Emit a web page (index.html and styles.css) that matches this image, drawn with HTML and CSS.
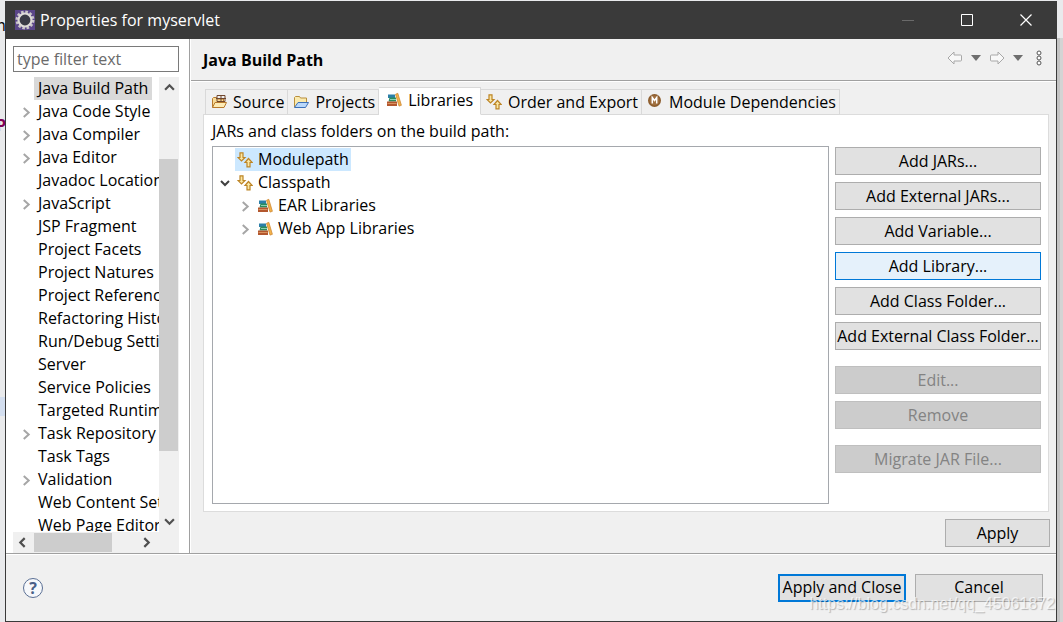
FILE: index.html
```
<!DOCTYPE html>
<html lang="en">
<head>
  <meta charset="UTF-8">
  <meta name="viewport" content="width=device-width, initial-scale=1.0">
  <title>Properties for myservlet</title>
  <link rel="stylesheet" href="styles.css">
</head>
<body>
  <!-- shared icons -->
  <svg class="sprite" aria-hidden="true">
    <symbol id="chev-right" viewBox="0 0 8 10"><path d="M1.500 1l4.500 4-4.500 4" fill="none" stroke="currentColor" stroke-width="1.800"/></symbol>
    <symbol id="chev-down" viewBox="0 0 10 8"><path d="M1 2l4 4 4-4" fill="none" stroke="currentColor" stroke-width="2"/></symbol>
    <symbol id="path-icon" viewBox="0 0 16 16">
      <path d="M3 .8h3v4.700h2L4.500 9 1 5.500h2z" fill="#fae7a4" stroke="#bd8526" stroke-width="1.200"/>
      <path d="M10 14.800V10.500H8L11.500 6.500l3.700 4H13v4.300z" fill="#fae7a4" stroke="#bd8526" stroke-width="1.200"/>
    </symbol>
    <symbol id="lib-icon" viewBox="0 0 16 16">
      <path d="M2 2.500h7v3.500H2z" fill="#2b7fa8"/>
      <path d="M3.500 5.500h6.500v4H2.500z" fill="#2c8c5c"/>
      <path d="M4 7.500h6" stroke="#8ad0b4"/>
      <path d="M1 9.500h10v4.500H1z" fill="#b3572e"/>
      <path d="M1.500 11.500h9" stroke="#d9925f"/>
      <path d="M9.500 2.300l2.300-1 3.600 12-2.400.8z" fill="#f3b24a" stroke="#c8802a" stroke-width=".7"/>
    </symbol>
  </svg>

  <div class="editor" aria-hidden="true">
    <span class="code-a">m</span>
    <span class="code-b">P</span>
    <span class="code-line"></span>
    <span class="editor-bar"></span>
  </div>

  <div class="window">
    <header class="titlebar">
      <svg class="app-icon" viewBox="0 0 20 20">
        <path d="M0 0h20v20H0z" fill="#5b4689"/>
        <circle cx="10" cy="10" r="8.200" fill="none" stroke="#c9c5c8" stroke-width="2.600" stroke-dasharray="2.600 1.700"/>
        <circle cx="10" cy="10" r="6.500" fill="#3b3b46" stroke="#dedad8" stroke-width="2.200"/>
      </svg>
      <h1>Properties for myservlet</h1>
      <div class="window-controls">
        <button aria-label="Minimize" disabled><svg viewBox="0 0 12 12"><path d="M0 6.500h12" stroke="#6a6a6a"/></svg></button>
        <button aria-label="Maximize"><svg viewBox="0 0 12 12"><path d="M.5.500h11v11H.500z" fill="none" stroke="#fff"/></svg></button>
        <button aria-label="Close"><svg viewBox="0 0 12 12"><path d="M.5.500l11 11M11.500.500l-11 11" stroke="#fff" stroke-width="1.200"/></svg></button>
      </div>
    </header>

    <div class="main">
      <aside class="sidebar">
        <input class="filter" type="text" placeholder="type filter text" aria-label="type filter text">
        <div class="tree-box">
          <ul class="tree">
            <li><span class="selected">Java Build Path</span></li>
            <li><svg class="chev"><use href="#chev-right"/></svg><span>Java Code Style</span></li>
            <li><svg class="chev"><use href="#chev-right"/></svg><span>Java Compiler</span></li>
            <li><svg class="chev"><use href="#chev-right"/></svg><span>Java Editor</span></li>
            <li><span>Javadoc Location</span></li>
            <li><svg class="chev"><use href="#chev-right"/></svg><span>JavaScript</span></li>
            <li><span>JSP Fragment</span></li>
            <li><span>Project Facets</span></li>
            <li><span>Project Natures</span></li>
            <li><span>Project References</span></li>
            <li><span>Refactoring History</span></li>
            <li><span>Run/Debug Settings</span></li>
            <li><span>Server</span></li>
            <li><span>Service Policies</span></li>
            <li><span>Targeted Runtimes</span></li>
            <li><svg class="chev"><use href="#chev-right"/></svg><span>Task Repository</span></li>
            <li><span>Task Tags</span></li>
            <li><svg class="chev"><use href="#chev-right"/></svg><span>Validation</span></li>
            <li><span>Web Content Settings</span></li>
            <li><span>Web Page Editor</span></li>
          </ul>
          <div class="scroll-y">
            <svg class="arrow up"><use href="#chev-down"/></svg>
            <div class="thumb"></div>
            <svg class="arrow"><use href="#chev-down"/></svg>
          </div>
        </div>
        <div class="scroll-x">
          <svg class="arrow left"><use href="#chev-down"/></svg>
          <div class="thumb"></div>
          <svg class="arrow right"><use href="#chev-down"/></svg>
        </div>
      </aside>

      <section class="content">
        <div class="page-head">
          <h2>Java Build Path</h2>
          <div class="nav-tools">
            <button aria-label="Back"><svg width="16" height="14" viewBox="0 0 16 14"><path d="M1 7l6-6v3h6.500q1 0 1 1v4q0 1-1 1H7v3z" fill="#f8f8f8" stroke="#a8a8a8"/></svg></button>
            <button aria-label="Back history"><svg width="10" height="6" viewBox="0 0 10 6"><path d="M0 0h10L5 6z" fill="#6e6e6e"/></svg></button>
            <button aria-label="Forward"><svg width="16" height="14" viewBox="0 0 16 14"><path d="M15 7L9 1v3H2.500q-1 0-1 1v4q0 1 1 1H9v3z" fill="#f8f8f8" stroke="#a8a8a8"/></svg></button>
            <button aria-label="Forward history"><svg width="10" height="6" viewBox="0 0 10 6"><path d="M0 0h10L5 6z" fill="#6e6e6e"/></svg></button>
            <button aria-label="View menu"><svg width="6" height="16" viewBox="0 0 6 16"><g fill="#fff" stroke="#555"><circle cx="3" cy="3" r="2"/><circle cx="3" cy="8" r="2"/><circle cx="3" cy="13" r="2"/></g></svg></button>
          </div>
        </div>

        <div class="page-body">
          <div class="tabs" role="tablist">
            <button class="tab" role="tab">
              <svg class="icon" viewBox="0 0 16 16"><path d="M1.500 13.500v-9l1-1h3l1 1.500h6v3" fill="#f8dc98" stroke="#b87a2c"/><path d="M1.500 13.500L4 8.500h11.500l-2.500 5z" fill="#fdebb5" stroke="#b87a2c"/><path d="M6 1.500h8v6H6zM10 1v7M5 4.500h10" fill="none" stroke="#70462c"/></svg>
              Source
            </button>
            <button class="tab" role="tab">
              <svg class="icon" viewBox="0 0 16 16"><path d="M1.500 13V3.500l1-1h4l1 1.500h6V8" fill="#faeaae" stroke="#b98f3c"/><path d="M1.500 13.500L5 8.500h10.500l-3 5z" fill="#b9d8fb" stroke="#3c70b8"/></svg>
              Projects
            </button>
            <button class="tab active" role="tab" aria-selected="true">
              <svg class="icon"><use href="#lib-icon"/></svg>
              Libraries
            </button>
            <button class="tab" role="tab">
              <svg class="icon"><use href="#path-icon"/></svg>
              Order and Export
            </button>
            <button class="tab" role="tab">
              <svg class="icon" viewBox="0 0 16 16"><circle cx="7.500" cy="6.500" r="6.500" fill="#8c5c2c"/><circle cx="7.500" cy="6.500" r="5" fill="#a07040"/><path d="M5.300 9.500v-6l2.200 3 2.200-3v6" fill="none" stroke="#fff" stroke-width="1.500"/></svg>
              Module Dependencies
            </button>
          </div>

          <div class="panel">
            <p class="panel-label">JARs and class folders on the build path:</p>
            <div class="columns">
              <ul class="paths">
                <li><span class="item selected"><svg class="icon"><use href="#path-icon"/></svg>Modulepath</span></li>
                <li><svg class="chev open"><use href="#chev-down"/></svg><span class="item"><svg class="icon"><use href="#path-icon"/></svg>Classpath</span></li>
                <li class="child"><svg class="chev"><use href="#chev-right"/></svg><span class="item"><svg class="icon"><use href="#lib-icon"/></svg>EAR Libraries</span></li>
                <li class="child"><svg class="chev"><use href="#chev-right"/></svg><span class="item"><svg class="icon"><use href="#lib-icon"/></svg>Web App Libraries</span></li>
              </ul>
              <div class="actions">
                <button class="btn">Add JARs...</button>
                <button class="btn">Add External JARs...</button>
                <button class="btn">Add Variable...</button>
                <button class="btn hot">Add Library...</button>
                <button class="btn">Add Class Folder...</button>
                <button class="btn">Add External Class Folder...</button>
                <button class="btn group" disabled>Edit...</button>
                <button class="btn" disabled>Remove</button>
                <button class="btn group" disabled>Migrate JAR File...</button>
              </div>
            </div>
          </div>

          <div class="apply-row">
            <button class="btn apply">Apply</button>
          </div>
        </div>
      </section>
    </div>

    <footer class="footer">
      <button class="help" aria-label="Help">?</button>
      <button class="btn wide default">Apply and Close</button>
      <button class="btn wide">Cancel</button>
    </footer>
  </div>
  <div class="watermark">https://blog.csdn.net/qq_45061872</div>
</body>
</html>
```
FILE: styles.css
```
* {
  box-sizing: border-box;
}
body {
  margin: 0;
  height: 100vh;
  padding: 1px 6px 0 5px;
  background: #e9eaec;
  color: #000;
  font-family: "Open Sans", "Noto Sans", sans-serif;
  font-size: 16px;
  line-height: 23px;
  overflow: hidden;
  position: relative;
}
button, input {
  font: inherit;
  color: inherit;
}
button {
  border: none;
  background: none;
  padding: 0;
}
h1, h2, p, ul {
  margin: 0;
  padding: 0;
  font-weight: normal;
}
ul {
  list-style: none;
}
svg {
  display: block;
  flex: none;
}
.sprite {
  position: absolute;
  width: 0;
  height: 0;
}
.icon {
  width: 16px;
  height: 16px;
}

/* editor behind the dialog */
.editor span {
  position: absolute;
}
.editor .code-a {
  left: -9px;
  top: 14px;
}
.editor .code-b {
  left: -4px;
  top: 114px;
  color: #7f0055;
  font-weight: bold;
}
.editor .code-line {
  left: 0;
  top: 397px;
  width: 5px;
  height: 19px;
  background: #d3deef;
}
.editor .editor-bar {
  right: 0;
  top: 38px;
  bottom: 0;
  width: 6px;
  background: linear-gradient(to right, #c4c4c4 50%, #d4d4d4 50%);
}

.window {
  position: relative;
  height: 100%;
  display: flex;
  flex-direction: column;
  background: #f0f0f0;
  border: 1px solid #3a3a3a;
  border-top: none;
}
.titlebar {
  display: flex;
  align-items: center;
  height: 38px;
  padding: 0 1px 0 9px;
  background: #3a3a3a;
  color: #fff;
  flex: none;
}
.app-icon {
  width: 20px;
  height: 20px;
}
.titlebar h1 {
  flex: 1;
  margin-left: 5px;
  font-size: 16px;
}
.window-controls {
  display: flex;
}
.window-controls button {
  width: 59px;
  height: 38px;
  display: flex;
  align-items: center;
  justify-content: center;
}
.window-controls svg {
  width: 12px;
  height: 12px;
}

.main {
  flex: 1;
  min-height: 0;
  display: flex;
}

/* left side */
.sidebar {
  width: 184px;
  flex: none;
  display: flex;
  flex-direction: column;
  padding: 7px 10px 0 7px;
  background: #fff;
  border-right: 1px solid #a0a0a0;
}
.filter {
  width: 100%;
  height: 26px;
  padding: 0 3px;
  border: 1px solid #7a7a7a;
  background: #fff;
}
.filter::placeholder {
  color: #6a6a6a;
  opacity: 1;
}
.tree-box {
  flex: 1;
  min-height: 0;
  display: flex;
  margin-top: 5px;
}
.tree {
  flex: 1;
  min-width: 0;
  overflow: hidden;
}
.tree li {
  position: relative;
  padding-left: 21px;
  height: 23px;
  white-space: nowrap;
}
.tree span {
  display: inline-block;
  padding: 0 4px;
}
.tree .selected {
  background: #d9d9d9;
}
.tree .chev {
  position: absolute;
  left: 9px;
  top: 7px;
}
.chev {
  width: 9px;
  height: 11px;
  color: #a6a6a6;
}
.chev.open {
  width: 10px;
  height: 8px;
  color: #404040;
}
.arrow {
  width: 11px;
  height: 9px;
  color: #505050;
}
.up {
  transform: rotate(180deg);
}
.left {
  transform: rotate(90deg);
}
.right {
  transform: rotate(-90deg);
}
.thumb {
  background: #cdcdcd;
}
.scroll-y {
  width: 20px;
  flex: none;
  display: flex;
  flex-direction: column;
  align-items: center;
  padding: 6px 0;
  background: #f0f0f0;
}
.scroll-y .thumb {
  width: 19px;
  height: 66%;
  margin: 67px 0 auto;
  align-self: flex-start;
}
.scroll-x {
  height: 21px;
  flex: none;
  display: flex;
  align-items: center;
  padding: 0 27px 0 4px;
  background: #f0f0f0;
}
.scroll-x .thumb {
  width: 78px;
  height: 19px;
  margin: 0 auto 0 6px;
}

/* right side */
.content {
  flex: 1;
  min-width: 0;
  display: flex;
  flex-direction: column;
  border-left: 1px solid #fff;
}
.page-head {
  height: 43px;
  flex: none;
  display: flex;
  align-items: center;
  justify-content: space-between;
  padding: 1px 14px 0 12px;
  border-bottom: 1px solid #fff;
  box-shadow: inset 0 -1px 0 #a0a0a0;
}
.page-head h2 {
  font-size: 16px;
  font-weight: bold;
}
.nav-tools {
  display: flex;
  align-items: center;
  gap: 8px;
  padding-bottom: 6px;
}
.nav-tools button:last-child {
  margin-left: 5px;
}
.page-body {
  flex: 1;
  min-height: 0;
  display: flex;
  flex-direction: column;
  padding: 5px 6px 6px 12px;
}
.tabs {
  display: flex;
  align-items: flex-end;
  padding-left: 2px;
  margin-bottom: -1px;
  position: relative;
}
.tab {
  display: flex;
  align-items: center;
  gap: 6px;
  height: 26px;
  padding: 0 3px 0 5px;
  border: 1px solid #d9d9d9;
  border-left: none;
  background: #f0f0f0;
  white-space: nowrap;
}
.tab:first-child {
  border-left: 1px solid #d9d9d9;
}
.tab.active {
  height: 28px;
  padding: 0 7px 2px;
  background: #fff;
  border-bottom-color: #fff;
}
.panel {
  flex: 1;
  min-height: 0;
  display: flex;
  flex-direction: column;
  margin-right: 1px;
  padding: 5px 7px 7px 8px;
  border: 1px solid #dcdcdc;
  background: #fff;
}
.panel-label {
  margin-bottom: 3px;
}
.columns {
  flex: 1;
  min-height: 0;
  display: flex;
  gap: 6px;
}
.paths {
  flex: 1;
  min-width: 0;
  padding: 1px;
  border: 1px solid #a5a8ad;
}
.paths li {
  position: relative;
  padding-left: 21px;
  height: 23px;
}
.paths .child {
  padding-left: 41px;
}
.paths .chev {
  position: absolute;
  left: 27px;
  top: 7px;
}
.paths .chev.open {
  left: 6px;
  top: 8px;
}
.item {
  display: inline-flex;
  align-items: center;
  gap: 5px;
  padding: 0 2px;
}
.item.selected {
  background: #cce8ff;
}
.actions {
  width: 206px;
  flex: none;
  display: flex;
  flex-direction: column;
  gap: 7px;
  padding-top: 1px;
}
.btn {
  height: 28px;
  flex: none;
  border: 1px solid #adadad;
  background: #e1e1e1;
  text-align: center;
  white-space: nowrap;
}
.btn.hot {
  border-color: #0078d7;
  background: #e5f1fb;
}
.btn:disabled {
  border-color: #bfbfbf;
  background: #ccc;
  color: #838383;
}
.btn.group {
  margin-top: 9px;
}
.apply-row {
  display: flex;
  justify-content: flex-end;
  padding-top: 7px;
}
.btn.apply {
  width: 105px;
}
.btn.wide {
  width: 128px;
}
.btn.default {
  margin-left: auto;
  border: 2px solid #0078d7;
}

.footer {
  height: 68px;
  flex: none;
  display: flex;
  align-items: center;
  gap: 9px;
  padding: 0 13px 0 17px;
  border-top: 1px solid #a0a0a0;
  box-shadow: inset 0 1px 0 #fff;
}
.help {
  width: 20px;
  height: 20px;
  border: 1px solid #5a6f94;
  border-radius: 50%;
  background: #f6f8fb;
  color: #4a6088;
  font-weight: bold;
  line-height: 18px;
}
.watermark {
  position: absolute;
  right: 8px;
  bottom: 7px;
  color: rgba(255, 255, 255, 0.7);
  font-family: "Liberation Sans", Arial, sans-serif;
  font-size: 16px;
  text-shadow: 1px 1px 1px rgba(0, 0, 0, 0.25);
  pointer-events: none;
}
```
